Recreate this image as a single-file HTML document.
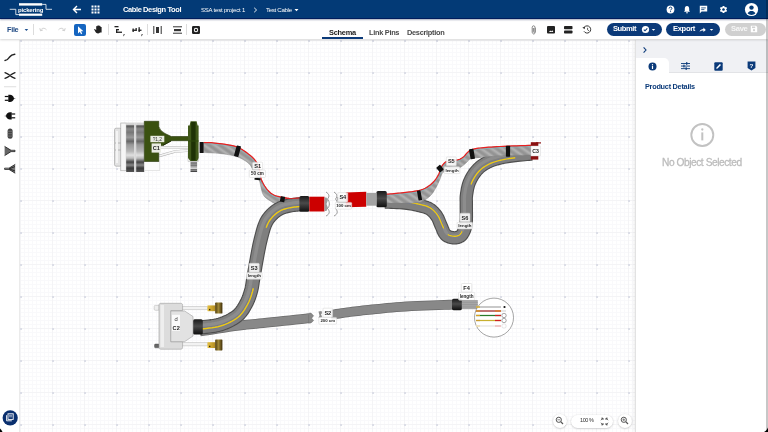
<!DOCTYPE html>
<html><head><meta charset="utf-8">
<style>
*{margin:0;padding:0;box-sizing:border-box}
html,body{width:768px;height:432px;overflow:hidden;background:#fff;font-family:"Liberation Sans",sans-serif}
.a{position:absolute}
#hdr{left:0;top:0;width:768px;height:19px;background:#033a76;border-bottom:1px solid #001c5c;z-index:3;box-shadow:0 1px 1.5px rgba(0,20,70,.35)}
#tb{left:0;top:19px;width:768px;height:20px;background:#fff;z-index:2;box-shadow:0 1px 2px rgba(0,0,0,.16)}
#ls{left:0;top:40px;width:20px;height:392px;background:#fff;border-right:1px solid #ebebeb;z-index:1}
#cv{left:20px;top:40px;width:616px;height:392px;background-color:#fff;
background-image:
 radial-gradient(circle at 1px 1px,#dcdee7 0.8px,transparent 1.6px),
 linear-gradient(#f4f4f6 1px,transparent 1px),
 linear-gradient(90deg,#f4f4f6 1px,transparent 1px),
 linear-gradient(#f9f9fb 1px,transparent 1px),
 linear-gradient(90deg,#f9f9fb 1px,transparent 1px);
background-size:32px 32px,32px 32px,32px 32px,4px 4px,4px 4px;
background-position:0 0,0 0,0 0,0 0,0 0}
#rp{left:635px;top:40px;width:133px;height:392px;background:#fff;border-left:1px solid #e2e2e2;z-index:1;box-shadow:-1px 0 3px rgba(0,0,0,.08)}
.t{white-space:nowrap;line-height:1}
svg,.t{will-change:transform}
</style></head><body>
<div id="cv" class="a"></div>
<svg class="a" style="left:0;top:0" width="768" height="432" viewBox="0 0 768 432">
<defs><linearGradient id="cylg" x1="0" y1="0" x2="0" y2="1"><stop offset="0" stop-color="#1a1a1a"/><stop offset="0.45" stop-color="#4a4a4a"/><stop offset="1" stop-color="#0e0e0e"/></linearGradient><linearGradient id="cyl1" x1="0" y1="0" x2="0" y2="1"><stop offset="0" stop-color="#d8d8d8"/><stop offset="0.04" stop-color="#cfcfcf"/><stop offset="0.07" stop-color="#555"/><stop offset="0.13" stop-color="#8a8a8a"/><stop offset="0.2" stop-color="#777"/><stop offset="0.3" stop-color="#9a9a9a"/><stop offset="0.38" stop-color="#666"/><stop offset="0.45" stop-color="#999"/><stop offset="0.58" stop-color="#b5b5b5"/><stop offset="0.66" stop-color="#e0e0e0"/><stop offset="0.72" stop-color="#bbb"/><stop offset="0.8" stop-color="#444"/><stop offset="0.86" stop-color="#888"/><stop offset="0.92" stop-color="#3a3a3a"/><stop offset="1" stop-color="#555"/></linearGradient><pattern id="rstripe" width="6" height="6" patternUnits="userSpaceOnUse" patternTransform="rotate(-55)"><rect x="0" y="0" width="2.4" height="6" fill="#848484" fill-opacity="0.45"/><rect x="3.4" y="0" width="1.6" height="6" fill="#c4c4c4" fill-opacity="0.5"/></pattern><linearGradient id="brass" x1="0" y1="0" x2="1" y2="0"><stop offset="0" stop-color="#e6c040"/><stop offset="1" stop-color="#b08a20"/></linearGradient><linearGradient id="brass2" x1="0" y1="0" x2="1" y2="0"><stop offset="0" stop-color="#4e3c0c"/><stop offset="0.45" stop-color="#a08838"/><stop offset="1" stop-color="#3e2e08"/></linearGradient></defs>
<path d="M200.00 331.50 L203.08 331.02 L207.27 330.37 L212.25 329.59 L217.75 328.73 L223.47 327.85 L229.11 327.00 L234.38 326.23 L239.00 325.60 L242.93 325.10 L246.45 324.70 L249.69 324.36 L252.81 324.06 L255.96 323.77 L259.27 323.47 L262.91 323.12 L267.00 322.70 L271.87 322.18 L277.50 321.58 L283.57 320.93 L289.75 320.27 L295.71 319.63 L301.12 319.05 L305.66 318.56 L309.00 318.20" stroke="#6a6a6a" stroke-width="9.8" fill="none"/>
<path d="M200.00 331.50 L203.08 331.02 L207.27 330.37 L212.25 329.59 L217.75 328.73 L223.47 327.85 L229.11 327.00 L234.38 326.23 L239.00 325.60 L242.93 325.10 L246.45 324.70 L249.69 324.36 L252.81 324.06 L255.96 323.77 L259.27 323.47 L262.91 323.12 L267.00 322.70 L271.87 322.18 L277.50 321.58 L283.57 320.93 L289.75 320.27 L295.71 319.63 L301.12 319.05 L305.66 318.56 L309.00 318.20" stroke="#888888" stroke-width="8.3" fill="none"/>
<path d="M331.00 314.80 L332.45 314.58 L334.34 314.29 L336.60 313.94 L339.12 313.56 L341.82 313.15 L344.59 312.74 L347.35 312.35 L350.00 312.00 L352.52 311.68 L355.01 311.37 L357.50 311.06 L360.06 310.76 L362.74 310.46 L365.59 310.15 L368.66 309.83 L372.00 309.50 L375.59 309.14 L379.35 308.76 L383.30 308.36 L387.44 307.96 L391.77 307.57 L396.30 307.18 L401.05 306.83 L406.00 306.50 L411.57 306.20 L417.94 305.90 L424.74 305.62 L431.62 305.36 L438.25 305.12 L444.25 304.92 L449.29 304.74 L453.00 304.60" stroke="#6a6a6a" stroke-width="9.8" fill="none"/>
<path d="M331.00 314.80 L332.45 314.58 L334.34 314.29 L336.60 313.94 L339.12 313.56 L341.82 313.15 L344.59 312.74 L347.35 312.35 L350.00 312.00 L352.52 311.68 L355.01 311.37 L357.50 311.06 L360.06 310.76 L362.74 310.46 L365.59 310.15 L368.66 309.83 L372.00 309.50 L375.59 309.14 L379.35 308.76 L383.30 308.36 L387.44 307.96 L391.77 307.57 L396.30 307.18 L401.05 306.83 L406.00 306.50 L411.57 306.20 L417.94 305.90 L424.74 305.62 L431.62 305.36 L438.25 305.12 L444.25 304.92 L449.29 304.74 L453.00 304.60" stroke="#888888" stroke-width="8.3" fill="none"/>
<path d="M203.60 142.50 L204.41 142.53 L205.42 142.54 L206.62 142.55 L207.99 142.58 L209.52 142.64 L211.21 142.73 L213.04 142.88 L215.00 143.10 L217.21 143.36 L219.74 143.65 L222.48 143.97 L225.34 144.34 L228.22 144.78 L231.02 145.29 L233.64 145.89 L236.00 146.60 L238.13 147.45 L240.16 148.43 L242.07 149.53 L243.88 150.69 L245.57 151.88 L247.16 153.07 L248.63 154.22 L250.00 155.30 L251.24 156.30 L252.34 157.26 L253.31 158.20 L254.19 159.13 L254.98 160.06 L255.70 161.01 L256.36 161.98 L257.00 163.00 L257.58 164.07 L258.07 165.18 L258.48 166.32 L258.84 167.48 L259.16 168.64 L259.45 169.79 L259.72 170.91 L260.00 172.00 L260.23 173.04 L260.39 174.04 L260.50 175.02 L260.59 175.98 L260.71 176.95 L260.88 177.93 L261.13 178.94 L261.50 180.00 L261.99 181.13 L262.57 182.32 L263.23 183.56 L263.94 184.81 L264.69 186.03 L265.46 187.21 L266.24 188.31 L267.00 189.30 L267.76 190.19 L268.53 191.02 L269.32 191.78 L270.12 192.49 L270.95 193.14 L271.78 193.74 L272.63 194.29 L273.50 194.80 L274.38 195.25 L275.26 195.62 L276.16 195.94 L277.08 196.21 L278.02 196.44 L278.98 196.66 L279.97 196.88 L281.00 197.10 L282.06 197.33 L283.17 197.56 L284.30 197.77 L285.46 197.97 L286.63 198.15 L287.82 198.30 L289.01 198.42 L290.20 198.50 L291.46 198.53 L292.84 198.50 L294.26 198.43 L295.67 198.34 L297.02 198.23 L298.22 198.13 L299.24 198.05 L300.00 198.00 L300.00 208.00 L299.23 208.01 L298.20 208.05 L296.98 208.09 L295.62 208.12 L294.19 208.15 L292.73 208.14 L291.32 208.10 L290.00 208.00 L288.74 207.86 L287.46 207.69 L286.18 207.49 L284.89 207.26 L283.63 207.00 L282.38 206.70 L281.17 206.37 L280.00 206.00 L278.88 205.60 L277.81 205.17 L276.77 204.71 L275.75 204.21 L274.75 203.68 L273.74 203.10 L272.73 202.47 L271.70 201.80 L270.63 201.11 L269.51 200.43 L268.37 199.72 L267.24 198.96 L266.14 198.12 L265.10 197.16 L264.14 196.07 L263.30 194.80 L262.58 193.25 L261.97 191.40 L261.45 189.35 L260.99 187.21 L260.56 185.10 L260.13 183.12 L259.69 181.39 L259.20 180.00 L258.67 179.01 L258.13 178.33 L257.58 177.88 L257.03 177.58 L256.49 177.32 L255.97 177.03 L255.47 176.62 L255.00 176.00 L254.58 175.18 L254.21 174.23 L253.88 173.21 L253.55 172.12 L253.22 171.03 L252.86 169.95 L252.46 168.93 L252.00 168.00 L251.51 167.15 L251.03 166.35 L250.54 165.59 L250.00 164.85 L249.40 164.13 L248.72 163.42 L247.93 162.72 L247.00 162.00 L245.95 161.26 L244.79 160.51 L243.53 159.75 L242.19 159.01 L240.75 158.28 L239.24 157.60 L237.66 156.97 L236.00 156.40 L234.24 155.90 L232.36 155.44 L230.38 155.03 L228.34 154.66 L226.25 154.33 L224.15 154.03 L222.05 153.75 L220.00 153.50 L217.86 153.28 L215.54 153.09 L213.16 152.94 L210.80 152.82 L208.57 152.72 L206.56 152.64 L204.87 152.56 L203.60 152.50Z" fill="#a2a2a2" stroke="#808080" stroke-width="0.5"/>
<path d="M203.60 142.50 L204.41 142.53 L205.42 142.54 L206.62 142.55 L207.99 142.58 L209.52 142.64 L211.21 142.73 L213.04 142.88 L215.00 143.10 L217.21 143.36 L219.74 143.65 L222.48 143.97 L225.34 144.34 L228.22 144.78 L231.02 145.29 L233.64 145.89 L236.00 146.60 L238.13 147.45 L240.16 148.43 L242.07 149.53 L243.88 150.69 L245.57 151.88 L247.16 153.07 L248.63 154.22 L250.00 155.30 L251.24 156.30 L252.34 157.26 L253.31 158.20 L254.19 159.13 L254.98 160.06 L255.70 161.01 L256.36 161.98 L257.00 163.00 L257.58 164.07 L258.07 165.18 L258.48 166.32 L258.84 167.48 L259.16 168.64 L259.45 169.79 L259.72 170.91 L260.00 172.00 L260.23 173.04 L260.39 174.04 L260.50 175.02 L260.59 175.98 L260.71 176.95 L260.88 177.93 L261.13 178.94 L261.50 180.00 L261.99 181.13 L262.57 182.32 L263.23 183.56 L263.94 184.81 L264.69 186.03 L265.46 187.21 L266.24 188.31 L267.00 189.30 L267.76 190.19 L268.53 191.02 L269.32 191.78 L270.12 192.49 L270.95 193.14 L271.78 193.74 L272.63 194.29 L273.50 194.80 L274.38 195.25 L275.26 195.62 L276.16 195.94 L277.08 196.21 L278.02 196.44 L278.98 196.66 L279.97 196.88 L281.00 197.10 L282.06 197.33 L283.17 197.56 L284.30 197.77 L285.46 197.97 L286.63 198.15 L287.82 198.30 L289.01 198.42 L290.20 198.50 L291.46 198.53 L292.84 198.50 L294.26 198.43 L295.67 198.34 L297.02 198.23 L298.22 198.13 L299.24 198.05 L300.00 198.00 L300.00 208.00 L299.23 208.01 L298.20 208.05 L296.98 208.09 L295.62 208.12 L294.19 208.15 L292.73 208.14 L291.32 208.10 L290.00 208.00 L288.74 207.86 L287.46 207.69 L286.18 207.49 L284.89 207.26 L283.63 207.00 L282.38 206.70 L281.17 206.37 L280.00 206.00 L278.88 205.60 L277.81 205.17 L276.77 204.71 L275.75 204.21 L274.75 203.68 L273.74 203.10 L272.73 202.47 L271.70 201.80 L270.63 201.11 L269.51 200.43 L268.37 199.72 L267.24 198.96 L266.14 198.12 L265.10 197.16 L264.14 196.07 L263.30 194.80 L262.58 193.25 L261.97 191.40 L261.45 189.35 L260.99 187.21 L260.56 185.10 L260.13 183.12 L259.69 181.39 L259.20 180.00 L258.67 179.01 L258.13 178.33 L257.58 177.88 L257.03 177.58 L256.49 177.32 L255.97 177.03 L255.47 176.62 L255.00 176.00 L254.58 175.18 L254.21 174.23 L253.88 173.21 L253.55 172.12 L253.22 171.03 L252.86 169.95 L252.46 168.93 L252.00 168.00 L251.51 167.15 L251.03 166.35 L250.54 165.59 L250.00 164.85 L249.40 164.13 L248.72 163.42 L247.93 162.72 L247.00 162.00 L245.95 161.26 L244.79 160.51 L243.53 159.75 L242.19 159.01 L240.75 158.28 L239.24 157.60 L237.66 156.97 L236.00 156.40 L234.24 155.90 L232.36 155.44 L230.38 155.03 L228.34 154.66 L226.25 154.33 L224.15 154.03 L222.05 153.75 L220.00 153.50 L217.86 153.28 L215.54 153.09 L213.16 152.94 L210.80 152.82 L208.57 152.72 L206.56 152.64 L204.87 152.56 L203.60 152.50Z" fill="url(#rstripe)"/>
<path d="M203.56 143.60 L204.39 143.63 L205.41 143.64 L206.60 143.65 L207.96 143.68 L209.47 143.74 L211.13 143.83 L212.93 143.98 L214.87 144.19 L217.09 144.46 L219.61 144.74 L222.34 145.06 L225.18 145.43 L228.03 145.86 L230.80 146.37 L233.36 146.96 L235.64 147.64 L237.69 148.45 L239.64 149.41 L241.50 150.47 L243.26 151.60 L244.92 152.77 L246.49 153.95 L247.95 155.09 L249.31 156.16 L250.53 157.14 L251.59 158.08 L252.53 158.98 L253.37 159.86 L254.12 160.75 L254.80 161.65 L255.44 162.58 L256.05 163.55 L256.59 164.55 L257.05 165.59 L257.44 166.68 L257.79 167.79 L258.10 168.92 L258.38 170.05 L258.66 171.18 L258.93 172.26 L259.15 173.24 L259.30 174.19 L259.40 175.13 L259.50 176.10 L259.62 177.11 L259.80 178.16 L260.08 179.26 L260.48 180.40 L260.99 181.59 L261.59 182.82 L262.26 184.09 L262.99 185.37 L263.76 186.62 L264.55 187.83 L265.35 188.96 L266.14 189.99 L266.94 190.92 L267.75 191.79 L268.57 192.59 L269.42 193.33 L270.28 194.02 L271.16 194.65 L272.06 195.23 L272.97 195.76 L273.91 196.24 L274.87 196.65 L275.83 196.98 L276.79 197.27 L277.76 197.51 L278.74 197.74 L279.74 197.95 L280.77 198.17 L281.84 198.41 L282.95 198.64 L284.10 198.86 L285.28 199.06 L286.48 199.24 L287.69 199.40 L288.92 199.52 L290.15 199.60 L291.46 199.62 L292.87 199.60 L294.32 199.53 L295.75 199.43 L297.10 199.33 L298.32 199.23 L299.32 199.15 L300.07 199.10" stroke="#80b8c2" stroke-width="0.8" fill="none"/>
<path d="M203.60 142.50 L204.41 142.53 L205.42 142.54 L206.62 142.55 L207.99 142.58 L209.52 142.64 L211.21 142.73 L213.04 142.88 L215.00 143.10 L217.21 143.36 L219.74 143.65 L222.48 143.97 L225.34 144.34 L228.22 144.78 L231.02 145.29 L233.64 145.89 L236.00 146.60 L238.13 147.45 L240.16 148.43 L242.07 149.53 L243.88 150.69 L245.57 151.88 L247.16 153.07 L248.63 154.22 L250.00 155.30 L251.24 156.30 L252.34 157.26 L253.31 158.20 L254.19 159.13 L254.98 160.06 L255.70 161.01 L256.36 161.98 L257.00 163.00 L257.58 164.07 L258.07 165.18 L258.48 166.32 L258.84 167.48 L259.16 168.64 L259.45 169.79 L259.72 170.91 L260.00 172.00 L260.23 173.04 L260.39 174.04 L260.50 175.02 L260.59 175.98 L260.71 176.95 L260.88 177.93 L261.13 178.94 L261.50 180.00 L261.99 181.13 L262.57 182.32 L263.23 183.56 L263.94 184.81 L264.69 186.03 L265.46 187.21 L266.24 188.31 L267.00 189.30 L267.76 190.19 L268.53 191.02 L269.32 191.78 L270.12 192.49 L270.95 193.14 L271.78 193.74 L272.63 194.29 L273.50 194.80 L274.38 195.25 L275.26 195.62 L276.16 195.94 L277.08 196.21 L278.02 196.44 L278.98 196.66 L279.97 196.88 L281.00 197.10 L282.06 197.33 L283.17 197.56 L284.30 197.77 L285.46 197.97 L286.63 198.15 L287.82 198.30 L289.01 198.42 L290.20 198.50 L291.46 198.53 L292.84 198.50 L294.26 198.43 L295.67 198.34 L297.02 198.23 L298.22 198.13 L299.24 198.05 L300.00 198.00" stroke="#e82020" stroke-width="1.25" fill="none"/>
<path d="M200.00 327.50 L201.56 327.31 L203.66 327.09 L206.17 326.84 L208.94 326.53 L211.84 326.16 L214.74 325.71 L217.51 325.16 L220.00 324.50 L222.32 323.72 L224.65 322.84 L226.95 321.87 L229.19 320.81 L231.34 319.69 L233.38 318.50 L235.28 317.27 L237.00 316.00 L238.54 314.67 L239.91 313.27 L241.14 311.80 L242.25 310.28 L243.27 308.73 L244.22 307.15 L245.12 305.57 L246.00 304.00 L246.83 302.42 L247.59 300.81 L248.29 299.18 L248.92 297.53 L249.50 295.88 L250.03 294.24 L250.53 292.61 L251.00 291.00 L251.41 289.43 L251.76 287.91 L252.04 286.41 L252.29 284.91 L252.53 283.39 L252.76 281.82 L253.01 280.20 L253.30 278.50 L253.62 276.71 L253.94 274.85 L254.27 272.93 L254.61 270.97 L254.95 268.98 L255.29 266.98 L255.65 264.98 L256.00 263.00 L256.36 260.99 L256.74 258.93 L257.12 256.84 L257.50 254.75 L257.88 252.69 L258.26 250.70 L258.64 248.79 L259.00 247.00 L259.35 245.33 L259.69 243.76 L260.03 242.27 L260.36 240.84 L260.69 239.47 L261.02 238.13 L261.36 236.81 L261.70 235.50 L262.04 234.20 L262.38 232.93 L262.71 231.68 L263.05 230.47 L263.39 229.29 L263.75 228.15 L264.12 227.05 L264.50 226.00 L264.89 225.00 L265.27 224.06 L265.65 223.17 L266.05 222.31 L266.47 221.48 L266.93 220.66 L267.44 219.83 L268.00 219.00 L268.62 218.15 L269.30 217.29 L270.02 216.44 L270.78 215.59 L271.57 214.77 L272.37 213.97 L273.19 213.21 L274.00 212.50 L274.81 211.83 L275.63 211.19 L276.46 210.58 L277.31 210.00 L278.18 209.45 L279.09 208.94 L280.02 208.45 L281.00 208.00 L282.02 207.58 L283.09 207.20 L284.18 206.86 L285.31 206.54 L286.46 206.25 L287.63 205.99 L288.81 205.74 L290.00 205.50 L291.27 205.28 L292.66 205.08 L294.12 204.90 L295.56 204.74 L296.94 204.60 L298.18 204.49 L299.22 204.38 L300.00 204.30" stroke="#4e4e4e" stroke-width="14.2" fill="none" stroke-linejoin="round"/>
<path d="M200.00 327.50 L201.56 327.31 L203.66 327.09 L206.17 326.84 L208.94 326.53 L211.84 326.16 L214.74 325.71 L217.51 325.16 L220.00 324.50 L222.32 323.72 L224.65 322.84 L226.95 321.87 L229.19 320.81 L231.34 319.69 L233.38 318.50 L235.28 317.27 L237.00 316.00 L238.54 314.67 L239.91 313.27 L241.14 311.80 L242.25 310.28 L243.27 308.73 L244.22 307.15 L245.12 305.57 L246.00 304.00 L246.83 302.42 L247.59 300.81 L248.29 299.18 L248.92 297.53 L249.50 295.88 L250.03 294.24 L250.53 292.61 L251.00 291.00 L251.41 289.43 L251.76 287.91 L252.04 286.41 L252.29 284.91 L252.53 283.39 L252.76 281.82 L253.01 280.20 L253.30 278.50 L253.62 276.71 L253.94 274.85 L254.27 272.93 L254.61 270.97 L254.95 268.98 L255.29 266.98 L255.65 264.98 L256.00 263.00 L256.36 260.99 L256.74 258.93 L257.12 256.84 L257.50 254.75 L257.88 252.69 L258.26 250.70 L258.64 248.79 L259.00 247.00 L259.35 245.33 L259.69 243.76 L260.03 242.27 L260.36 240.84 L260.69 239.47 L261.02 238.13 L261.36 236.81 L261.70 235.50 L262.04 234.20 L262.38 232.93 L262.71 231.68 L263.05 230.47 L263.39 229.29 L263.75 228.15 L264.12 227.05 L264.50 226.00 L264.89 225.00 L265.27 224.06 L265.65 223.17 L266.05 222.31 L266.47 221.48 L266.93 220.66 L267.44 219.83 L268.00 219.00 L268.62 218.15 L269.30 217.29 L270.02 216.44 L270.78 215.59 L271.57 214.77 L272.37 213.97 L273.19 213.21 L274.00 212.50 L274.81 211.83 L275.63 211.19 L276.46 210.58 L277.31 210.00 L278.18 209.45 L279.09 208.94 L280.02 208.45 L281.00 208.00 L282.02 207.58 L283.09 207.20 L284.18 206.86 L285.31 206.54 L286.46 206.25 L287.63 205.99 L288.81 205.74 L290.00 205.50 L291.27 205.28 L292.66 205.08 L294.12 204.90 L295.56 204.74 L296.94 204.60 L298.18 204.49 L299.22 204.38 L300.00 204.30" stroke="#7f7f7f" stroke-width="12.0" fill="none" stroke-linejoin="round"/>
<path d="M199.76 325.53 L201.34 325.33 L203.46 325.11 L205.96 324.86 L208.70 324.56 L211.56 324.19 L214.40 323.75 L217.06 323.22 L219.43 322.59 L221.66 321.85 L223.91 321.00 L226.13 320.05 L228.30 319.03 L230.38 317.94 L232.34 316.81 L234.15 315.63 L235.76 314.44 L237.17 313.23 L238.43 311.94 L239.57 310.57 L240.62 309.15 L241.59 307.67 L242.50 306.15 L243.39 304.59 L244.25 303.05 L245.06 301.53 L245.78 300.00 L246.44 298.43 L247.05 296.84 L247.62 295.24 L248.14 293.64 L248.63 292.04 L249.08 290.47 L249.48 288.96 L249.81 287.51 L250.09 286.06 L250.33 284.59 L250.56 283.09 L250.79 281.52 L251.05 279.88 L251.34 278.16 L251.66 276.37 L251.98 274.51 L252.31 272.59 L252.65 270.63 L252.99 268.64 L253.34 266.64 L253.69 264.64 L254.04 262.65 L254.41 260.64 L254.78 258.57 L255.16 256.48 L255.55 254.39 L255.93 252.32 L256.31 250.32 L256.69 248.40 L257.05 246.60 L257.41 244.92 L257.75 243.33 L258.09 241.83 L258.43 240.39 L258.76 239.00 L259.10 237.65 L259.43 236.32 L259.78 235.00 L260.12 233.69 L260.46 232.41 L260.79 231.16 L261.14 229.92 L261.49 228.72 L261.86 227.54 L262.24 226.40 L262.64 225.30 L263.04 224.27 L263.43 223.30 L263.84 222.36 L264.26 221.44 L264.72 220.54 L265.22 219.65 L265.77 218.76 L266.37 217.86 L267.04 216.94 L267.76 216.03 L268.52 215.13 L269.32 214.24 L270.15 213.38 L270.99 212.54 L271.85 211.74 L272.71 210.99 L273.57 210.28 L274.43 209.60 L275.32 208.95 L276.22 208.34 L277.16 207.75 L278.14 207.19 L279.15 206.67 L280.21 206.18 L281.31 205.73 L282.45 205.32 L283.62 204.95 L284.80 204.62 L286.00 204.32 L287.20 204.05 L288.41 203.79 L289.64 203.55 L290.96 203.32 L292.40 203.11 L293.89 202.93 L295.35 202.77 L296.74 202.63 L297.99 202.51 L299.02 202.41 L299.79 202.32" stroke="#8d8d8d" stroke-width="3.4" fill="none" stroke-linejoin="round"/>
<path d="M200.20 329.09 L201.74 328.90 L203.83 328.68 L206.34 328.43 L209.13 328.12 L212.07 327.74 L215.02 327.28 L217.86 326.72 L220.46 326.03 L222.86 325.23 L225.24 324.33 L227.60 323.33 L229.90 322.25 L232.12 321.09 L234.22 319.86 L236.19 318.58 L238.00 317.25 L239.63 315.84 L241.09 314.34 L242.40 312.79 L243.56 311.19 L244.62 309.58 L245.60 307.96 L246.51 306.36 L247.41 304.76 L248.27 303.13 L249.05 301.46 L249.77 299.78 L250.42 298.08 L251.01 296.40 L251.56 294.72 L252.06 293.07 L252.54 291.43 L252.97 289.81 L253.32 288.26" stroke="#6f7796" stroke-width="2.8" fill="none"/>
<path d="M200.20 329.09 L201.74 328.90 L203.83 328.68 L206.34 328.43 L209.13 328.12 L212.07 327.74 L215.02 327.28 L217.86 326.72 L220.46 326.03 L222.86 325.23 L225.24 324.33 L227.60 323.33 L229.90 322.25 L232.12 321.09 L234.22 319.86 L236.19 318.58 L238.00 317.25 L239.63 315.84 L241.09 314.34 L242.40 312.79 L243.56 311.19 L244.62 309.58 L245.60 307.96 L246.51 306.36 L247.41 304.76 L248.27 303.13 L249.05 301.46 L249.77 299.78 L250.42 298.08 L251.01 296.40 L251.56 294.72 L252.06 293.07 L252.54 291.43 L252.97 289.81 L253.32 288.26" stroke="#ecc814" stroke-width="1.5" fill="none"/>
<path d="M266.18 227.81 L266.56 226.77 L266.93 225.81 L267.30 224.91 L267.66 224.07 L268.03 223.27 L268.42 222.51 L268.83 221.77 L269.29 221.03 L269.80 220.27 L270.37 219.48 L271.00 218.69 L271.68 217.88 L272.40 217.09 L273.14 216.31 L273.90 215.56 L274.66 214.85 L275.43 214.18 L276.19 213.54 L276.96 212.94 L277.73 212.37 L278.52 211.84 L279.32 211.34 L280.14 210.87 L280.99 210.43 L281.88 210.02 L282.81 209.64 L283.78 209.29 L284.81 208.97 L285.88 208.67 L286.98 208.39 L288.11 208.14 L289.26 207.89 L290.40 207.66 L291.61 207.45 L292.95 207.26 L294.37 207.09 L295.79 206.93 L297.15 206.79 L298.39 206.67 L299.44 206.57 L300.24 206.49" stroke="#6f7796" stroke-width="2.8" fill="none"/>
<path d="M266.18 227.81 L266.56 226.77 L266.93 225.81 L267.30 224.91 L267.66 224.07 L268.03 223.27 L268.42 222.51 L268.83 221.77 L269.29 221.03 L269.80 220.27 L270.37 219.48 L271.00 218.69 L271.68 217.88 L272.40 217.09 L273.14 216.31 L273.90 215.56 L274.66 214.85 L275.43 214.18 L276.19 213.54 L276.96 212.94 L277.73 212.37 L278.52 211.84 L279.32 211.34 L280.14 210.87 L280.99 210.43 L281.88 210.02 L282.81 209.64 L283.78 209.29 L284.81 208.97 L285.88 208.67 L286.98 208.39 L288.11 208.14 L289.26 207.89 L290.40 207.66 L291.61 207.45 L292.95 207.26 L294.37 207.09 L295.79 206.93 L297.15 206.79 L298.39 206.67 L299.44 206.57 L300.24 206.49" stroke="#ecc814" stroke-width="1.5" fill="none"/>
<path d="M281.00 197.10 L281.71 197.22 L282.64 197.40 L283.75 197.61 L284.99 197.83 L286.30 198.05 L287.64 198.25 L288.96 198.41 L290.20 198.50 L291.46 198.53 L292.84 198.50 L294.26 198.43 L295.67 198.34 L297.02 198.23 L298.22 198.13 L299.24 198.05 L300.00 198.00" stroke="#e32222" stroke-width="1" fill="none"/>
<path d="M385.00 202.00 L386.58 202.06 L388.71 202.14 L391.25 202.22 L394.06 202.33 L396.99 202.45 L399.88 202.60 L402.60 202.78 L405.00 203.00 L407.15 203.26 L409.23 203.56 L411.23 203.90 L413.15 204.26 L414.99 204.64 L416.75 205.03 L418.42 205.42 L420.00 205.80 L421.48 206.15 L422.84 206.48 L424.11 206.80 L425.30 207.14 L426.43 207.50 L427.51 207.92 L428.56 208.42 L429.60 209.00 L430.62 209.68 L431.59 210.42 L432.53 211.24 L433.43 212.11 L434.28 213.02 L435.09 213.99 L435.87 214.98 L436.60 216.00 L437.28 217.07 L437.89 218.22 L438.46 219.42 L438.99 220.66 L439.49 221.90 L439.99 223.14 L440.49 224.34 L441.00 225.50 L441.51 226.65 L441.99 227.82 L442.46 228.99 L442.93 230.14 L443.40 231.24 L443.90 232.26 L444.43 233.19 L445.00 234.00 L445.62 234.68 L446.26 235.26 L446.93 235.75 L447.63 236.17 L448.35 236.52 L449.09 236.81 L449.84 237.07 L450.60 237.30 L451.40 237.50 L452.24 237.65 L453.10 237.76 L453.98 237.83 L454.86 237.83 L455.71 237.78 L456.53 237.67 L457.30 237.50 L458.02 237.28 L458.72 237.04 L459.40 236.74 L460.04 236.39 L460.67 235.95 L461.27 235.42 L461.85 234.77 L462.40 234.00 L462.94 233.12 L463.48 232.17 L464.00 231.12 L464.50 229.97 L464.96 228.69 L465.37 227.29 L465.72 225.73 L466.00 224.00 L466.20 221.99 L466.31 219.67 L466.36 217.14 L466.36 214.50 L466.34 211.86 L466.31 209.33 L466.29 207.01 L466.30 205.00 L466.31 203.34 L466.29 201.94 L466.26 200.72 L466.23 199.62 L466.22 198.57 L466.26 197.50 L466.34 196.33 L466.50 195.00 L466.71 193.51 L466.95 191.94 L467.22 190.30 L467.54 188.62 L467.92 186.93 L468.37 185.25 L468.89 183.60 L469.50 182.00 L470.21 180.42 L471.00 178.82 L471.87 177.23 L472.81 175.66 L473.81 174.13 L474.84 172.66 L475.91 171.28 L477.00 170.00 L478.11 168.83 L479.25 167.74 L480.44 166.73 L481.66 165.78 L482.92 164.90 L484.23 164.06 L485.59 163.26 L487.00 162.50 L488.47 161.78 L489.99 161.12 L491.57 160.50 L493.19 159.94 L494.85 159.41 L496.54 158.91 L498.26 158.45 L500.00 158.00 L501.77 157.58 L503.56 157.21 L505.39 156.87 L507.25 156.56 L509.14 156.28 L511.06 156.01 L513.02 155.75 L515.00 155.50 L517.15 155.25 L519.51 155.02 L521.98 154.80 L524.44 154.59 L526.78 154.41 L528.90 154.25 L530.67 154.11 L532.00 154.00" stroke="#4e4e4e" stroke-width="13.4" fill="none" stroke-linejoin="round"/>
<path d="M385.00 202.00 L386.58 202.06 L388.71 202.14 L391.25 202.22 L394.06 202.33 L396.99 202.45 L399.88 202.60 L402.60 202.78 L405.00 203.00 L407.15 203.26 L409.23 203.56 L411.23 203.90 L413.15 204.26 L414.99 204.64 L416.75 205.03 L418.42 205.42 L420.00 205.80 L421.48 206.15 L422.84 206.48 L424.11 206.80 L425.30 207.14 L426.43 207.50 L427.51 207.92 L428.56 208.42 L429.60 209.00 L430.62 209.68 L431.59 210.42 L432.53 211.24 L433.43 212.11 L434.28 213.02 L435.09 213.99 L435.87 214.98 L436.60 216.00 L437.28 217.07 L437.89 218.22 L438.46 219.42 L438.99 220.66 L439.49 221.90 L439.99 223.14 L440.49 224.34 L441.00 225.50 L441.51 226.65 L441.99 227.82 L442.46 228.99 L442.93 230.14 L443.40 231.24 L443.90 232.26 L444.43 233.19 L445.00 234.00 L445.62 234.68 L446.26 235.26 L446.93 235.75 L447.63 236.17 L448.35 236.52 L449.09 236.81 L449.84 237.07 L450.60 237.30 L451.40 237.50 L452.24 237.65 L453.10 237.76 L453.98 237.83 L454.86 237.83 L455.71 237.78 L456.53 237.67 L457.30 237.50 L458.02 237.28 L458.72 237.04 L459.40 236.74 L460.04 236.39 L460.67 235.95 L461.27 235.42 L461.85 234.77 L462.40 234.00 L462.94 233.12 L463.48 232.17 L464.00 231.12 L464.50 229.97 L464.96 228.69 L465.37 227.29 L465.72 225.73 L466.00 224.00 L466.20 221.99 L466.31 219.67 L466.36 217.14 L466.36 214.50 L466.34 211.86 L466.31 209.33 L466.29 207.01 L466.30 205.00 L466.31 203.34 L466.29 201.94 L466.26 200.72 L466.23 199.62 L466.22 198.57 L466.26 197.50 L466.34 196.33 L466.50 195.00 L466.71 193.51 L466.95 191.94 L467.22 190.30 L467.54 188.62 L467.92 186.93 L468.37 185.25 L468.89 183.60 L469.50 182.00 L470.21 180.42 L471.00 178.82 L471.87 177.23 L472.81 175.66 L473.81 174.13 L474.84 172.66 L475.91 171.28 L477.00 170.00 L478.11 168.83 L479.25 167.74 L480.44 166.73 L481.66 165.78 L482.92 164.90 L484.23 164.06 L485.59 163.26 L487.00 162.50 L488.47 161.78 L489.99 161.12 L491.57 160.50 L493.19 159.94 L494.85 159.41 L496.54 158.91 L498.26 158.45 L500.00 158.00 L501.77 157.58 L503.56 157.21 L505.39 156.87 L507.25 156.56 L509.14 156.28 L511.06 156.01 L513.02 155.75 L515.00 155.50 L517.15 155.25 L519.51 155.02 L521.98 154.80 L524.44 154.59 L526.78 154.41 L528.90 154.25 L530.67 154.11 L532.00 154.00" stroke="#7f7f7f" stroke-width="11.2" fill="none" stroke-linejoin="round"/>
<path d="M385.08 200.13 L386.65 200.19 L388.77 200.26 L391.32 200.35 L394.14 200.45 L397.08 200.58 L399.99 200.73 L402.75 200.91 L405.20 201.13 L407.40 201.40 L409.52 201.71 L411.56 202.05 L413.51 202.42 L415.38 202.81 L417.16 203.20 L418.85 203.59 L420.44 203.98 L421.91 204.33 L423.29 204.66 L424.59 204.99 L425.84 205.34 L427.06 205.74 L428.25 206.20 L429.42 206.75 L430.58 207.40 L431.71 208.15 L432.78 208.97 L433.80 209.86 L434.77 210.79 L435.68 211.78 L436.55 212.80 L437.37 213.86 L438.16 214.95 L438.90 216.13 L439.57 217.38 L440.17 218.65 L440.72 219.93 L441.23 221.20 L441.73 222.43 L442.21 223.61 L442.71 224.74 L443.23 225.91 L443.73 227.11 L444.20 228.29 L444.66 229.41 L445.11 230.46 L445.56 231.39 L446.01 232.19 L446.47 232.83 L446.94 233.36 L447.45 233.81 L447.97 234.19 L448.52 234.52 L449.11 234.80 L449.74 235.06 L450.41 235.28 L451.10 235.49 L451.79 235.67 L452.52 235.80 L453.28 235.90 L454.05 235.95 L454.81 235.96 L455.53 235.92 L456.20 235.83 L456.83 235.68 L457.44 235.50 L458.04 235.29 L458.57 235.06 L459.05 234.80 L459.50 234.48 L459.94 234.09 L460.38 233.60 L460.84 232.96 L461.33 232.17 L461.83 231.29 L462.30 230.33 L462.75 229.28 L463.17 228.12 L463.55 226.82 L463.88 225.37 L464.14 223.76 L464.32 221.86 L464.43 219.61 L464.48 217.12 L464.49 214.51 L464.46 211.88 L464.43 209.35 L464.41 207.01 L464.42 204.99 L464.43 203.35 L464.42 201.97 L464.38 200.77 L464.36 199.66 L464.35 198.55 L464.38 197.40 L464.47 196.15 L464.64 194.76 L464.85 193.24 L465.10 191.64 L465.38 189.97 L465.71 188.24 L466.10 186.49 L466.57 184.73 L467.12 182.98 L467.77 181.28 L468.51 179.62 L469.34 177.96 L470.24 176.30 L471.22 174.66 L472.25 173.07 L473.34 171.55 L474.45 170.10 L475.60 168.75 L476.78 167.50 L478.00 166.35 L479.25 165.27 L480.54 164.27 L481.88 163.34 L483.25 162.46 L484.67 161.63 L486.14 160.83 L487.68 160.08 L489.28 159.38 L490.92 158.74 L492.59 158.16 L494.30 157.61 L496.03 157.11 L497.78 156.63 L499.55 156.18 L501.36 155.75 L503.20 155.37 L505.07 155.02 L506.96 154.71 L508.87 154.42 L510.81 154.15 L512.78 153.89 L514.78 153.64 L516.95 153.39 L519.33 153.15 L521.81 152.93 L524.29 152.72 L526.64 152.54 L528.75 152.38 L530.53 152.24 L531.85 152.13" stroke="#8d8d8d" stroke-width="3.2" fill="none" stroke-linejoin="round"/>
<path d="M405.16 201.71 L407.32 201.97 L409.43 202.28 L411.46 202.62 L413.40 202.99 L415.26 203.37 L417.03 203.76 L418.72 204.15 L420.30 204.54 L421.78 204.89 L423.15 205.22 L424.44 205.55 L425.68 205.89 L426.86 206.28 L428.02 206.73 L429.16 207.26 L430.28 207.89 L431.37 208.62 L432.42 209.42 L433.41 210.28 L434.35 211.20 L435.25 212.16 L436.10 213.17 L436.91 214.20 L437.68 215.27 L438.40 216.42 L439.05 217.64 L439.64 218.89 L440.19 220.15 L440.70 221.41 L441.19 222.65 L441.68 223.83 L442.19 224.97 L442.70 226.13 L443.20 227.33 L443.67 228.51" stroke="#6f7796" stroke-width="2.6" fill="none"/>
<path d="M405.16 201.71 L407.32 201.97 L409.43 202.28 L411.46 202.62 L413.40 202.99 L415.26 203.37 L417.03 203.76 L418.72 204.15 L420.30 204.54 L421.78 204.89 L423.15 205.22 L424.44 205.55 L425.68 205.89 L426.86 206.28 L428.02 206.73 L429.16 207.26 L430.28 207.89 L431.37 208.62 L432.42 209.42 L433.41 210.28 L434.35 211.20 L435.25 212.16 L436.10 213.17 L436.91 214.20 L437.68 215.27 L438.40 216.42 L439.05 217.64 L439.64 218.89 L440.19 220.15 L440.70 221.41 L441.19 222.65 L441.68 223.83 L442.19 224.97 L442.70 226.13 L443.20 227.33 L443.67 228.51" stroke="#ecc814" stroke-width="1.4" fill="none"/>
<path d="M447.75 234.38 L448.39 234.76 L449.00 235.06 L449.64 235.32 L450.32 235.55 L451.02 235.76 L451.73 235.93 L452.48 236.07 L453.26 236.17 L454.04 236.23 L454.82 236.23 L455.56 236.19 L456.25 236.10 L456.90 235.95 L457.53 235.76 L458.14 235.55 L458.69 235.31 L459.20 235.03 L459.67 234.70 L460.14 234.29 L460.59 233.78 L461.07 233.11 L461.57 232.31 L462.09 231.38" stroke="#6f7796" stroke-width="2.6" fill="none"/>
<path d="M447.75 234.38 L448.39 234.76 L449.00 235.06 L449.64 235.32 L450.32 235.55 L451.02 235.76 L451.73 235.93 L452.48 236.07 L453.26 236.17 L454.04 236.23 L454.82 236.23 L455.56 236.19 L456.25 236.10 L456.90 235.95 L457.53 235.76 L458.14 235.55 L458.69 235.31 L459.20 235.03 L459.67 234.70 L460.14 234.29 L460.59 233.78 L461.07 233.11 L461.57 232.31 L462.09 231.38" stroke="#ecc814" stroke-width="1.4" fill="none"/>
<path d="M471.04 184.42 L471.63 182.88 L472.28 181.40 L473.04 179.89 L473.87 178.37 L474.76 176.87 L475.71 175.42 L476.69 174.03 L477.70 172.73 L478.71 171.54 L479.74 170.45 L480.80 169.44 L481.89 168.51 L483.02 167.63 L484.20 166.81 L485.43 166.02 L486.72 165.27 L488.05 164.54 L489.43 163.87 L490.87 163.24 L492.36 162.66 L493.92 162.12 L495.52 161.61 L497.16 161.13 L498.85 160.67 L500.55 160.23 L502.26 159.83 L504.01 159.47 L505.79 159.14 L507.61 158.83 L509.47 158.55 L511.37 158.29 L513.31 158.03 L515.29 157.78" stroke="#6f7796" stroke-width="2.6" fill="none"/>
<path d="M471.04 184.42 L471.63 182.88 L472.28 181.40 L473.04 179.89 L473.87 178.37 L474.76 176.87 L475.71 175.42 L476.69 174.03 L477.70 172.73 L478.71 171.54 L479.74 170.45 L480.80 169.44 L481.89 168.51 L483.02 167.63 L484.20 166.81 L485.43 166.02 L486.72 165.27 L488.05 164.54 L489.43 163.87 L490.87 163.24 L492.36 162.66 L493.92 162.12 L495.52 161.61 L497.16 161.13 L498.85 160.67 L500.55 160.23 L502.26 159.83 L504.01 159.47 L505.79 159.14 L507.61 158.83 L509.47 158.55 L511.37 158.29 L513.31 158.03 L515.29 157.78" stroke="#ecc814" stroke-width="1.4" fill="none"/>
<path d="M386.00 194.30 L387.07 194.20 L388.49 194.08 L390.18 193.93 L392.06 193.76 L394.06 193.58 L396.10 193.39 L398.11 193.20 L400.00 193.00 L401.86 192.81 L403.79 192.61 L405.76 192.41 L407.74 192.21 L409.68 191.98 L411.56 191.75 L413.35 191.49 L415.00 191.20 L416.52 190.91 L417.93 190.61 L419.26 190.31 L420.51 189.99 L421.72 189.63 L422.89 189.22 L424.04 188.75 L425.20 188.20 L426.36 187.57 L427.50 186.87 L428.63 186.10 L429.72 185.29 L430.77 184.44 L431.77 183.56 L432.72 182.68 L433.60 181.80 L434.41 180.90 L435.17 179.97 L435.87 179.01 L436.52 178.03 L437.12 177.05 L437.69 176.08 L438.21 175.12 L438.70 174.20 L439.13 173.29 L439.49 172.36 L439.80 171.45 L440.07 170.54 L440.33 169.67 L440.59 168.83 L440.87 168.03 L441.20 167.30 L441.57 166.62 L441.96 165.98 L442.38 165.37 L442.79 164.81 L443.21 164.29 L443.63 163.82 L444.02 163.39 L444.40 163.00 L444.73 162.68 L445.01 162.42 L445.27 162.21 L445.52 162.04 L445.80 161.90 L446.12 161.77 L446.52 161.64 L447.00 161.50 L447.59 161.35 L448.26 161.21 L449.00 161.09 L449.79 160.97 L450.60 160.85 L451.42 160.74 L452.23 160.62 L453.00 160.50 L453.76 160.39 L454.54 160.29 L455.32 160.20 L456.09 160.11 L456.86 160.00 L457.61 159.87 L458.32 159.71 L459.00 159.50 L459.64 159.25 L460.25 158.98 L460.83 158.67 L461.39 158.34 L461.93 157.99 L462.46 157.61 L462.98 157.22 L463.50 156.80 L464.01 156.34 L464.50 155.84 L464.98 155.30 L465.45 154.75 L465.91 154.20 L466.37 153.66 L466.83 153.16 L467.30 152.70 L467.73 152.29 L468.11 151.91 L468.46 151.55 L468.83 151.22 L469.23 150.90 L469.70 150.59 L470.28 150.29 L471.00 150.00 L471.80 149.71 L472.62 149.44 L473.50 149.18 L474.48 148.93 L475.59 148.68 L476.85 148.45 L478.31 148.22 L480.00 148.00 L481.90 147.79 L483.97 147.58 L486.21 147.39 L488.62 147.20 L491.21 147.02 L493.97 146.84 L496.90 146.67 L500.00 146.50 L503.56 146.33 L507.70 146.15 L512.18 145.98 L516.75 145.81 L521.16 145.65 L525.17 145.51 L528.53 145.39 L531.00 145.30 L531.00 155.00 L528.92 155.04 L526.07 155.08 L522.67 155.13 L518.94 155.19 L515.09 155.25 L511.34 155.33 L507.90 155.41 L505.00 155.50 L502.60 155.60 L500.48 155.70 L498.57 155.82 L496.81 155.94 L495.14 156.07 L493.49 156.20 L491.80 156.35 L490.00 156.50 L488.06 156.67 L486.02 156.85 L483.94 157.05 L481.88 157.25 L479.89 157.45 L478.05 157.65 L476.40 157.83 L475.00 158.00 L473.88 158.14 L473.00 158.24 L472.30 158.32 L471.75 158.41 L471.29 158.50 L470.88 158.62 L470.46 158.78 L470.00 159.00 L469.54 159.28 L469.13 159.60 L468.77 159.96 L468.44 160.34 L468.11 160.75 L467.77 161.17 L467.41 161.59 L467.00 162.00 L466.55 162.42 L466.07 162.86 L465.57 163.32 L465.06 163.78 L464.54 164.24 L464.02 164.68 L463.51 165.11 L463.00 165.50 L462.51 165.87 L462.05 166.22 L461.59 166.55 L461.12 166.88 L460.65 167.18 L460.14 167.47 L459.60 167.74 L459.00 168.00 L458.35 168.24 L457.64 168.46 L456.90 168.66 L456.12 168.84 L455.34 169.02 L454.55 169.18 L453.76 169.34 L453.00 169.50 L452.24 169.64 L451.46 169.75 L450.68 169.85 L449.91 169.94 L449.14 170.04 L448.39 170.16 L447.68 170.31 L447.00 170.50 L446.35 170.72 L445.72 170.94 L445.11 171.17 L444.53 171.44 L443.98 171.74 L443.45 172.09 L442.96 172.51 L442.50 173.00 L442.10 173.57 L441.77 174.20 L441.48 174.88 L441.22 175.62 L440.96 176.41 L440.68 177.24 L440.37 178.11 L440.00 179.00 L439.59 179.94 L439.15 180.95 L438.70 182.00 L438.22 183.09 L437.71 184.20 L437.18 185.32 L436.61 186.42 L436.00 187.50 L435.37 188.58 L434.73 189.68 L434.07 190.80 L433.38 191.91 L432.63 193.00 L431.83 194.05 L430.96 195.06 L430.00 196.00 L428.98 196.90 L427.90 197.79 L426.76 198.65 L425.56 199.47 L424.29 200.23 L422.95 200.91 L421.52 201.51 L420.00 202.00 L418.39 202.37 L416.70 202.62 L414.92 202.79 L413.06 202.88 L411.14 202.92 L409.15 202.94 L407.10 202.96 L405.00 203.00 L402.69 203.05 L400.09 203.07 L397.33 203.07 L394.56 203.06 L391.91 203.04 L389.51 203.02 L387.49 203.01 L386.00 203.00Z" fill="#a2a2a2" stroke="#808080" stroke-width="0.5"/>
<path d="M386.00 194.30 L387.07 194.20 L388.49 194.08 L390.18 193.93 L392.06 193.76 L394.06 193.58 L396.10 193.39 L398.11 193.20 L400.00 193.00 L401.86 192.81 L403.79 192.61 L405.76 192.41 L407.74 192.21 L409.68 191.98 L411.56 191.75 L413.35 191.49 L415.00 191.20 L416.52 190.91 L417.93 190.61 L419.26 190.31 L420.51 189.99 L421.72 189.63 L422.89 189.22 L424.04 188.75 L425.20 188.20 L426.36 187.57 L427.50 186.87 L428.63 186.10 L429.72 185.29 L430.77 184.44 L431.77 183.56 L432.72 182.68 L433.60 181.80 L434.41 180.90 L435.17 179.97 L435.87 179.01 L436.52 178.03 L437.12 177.05 L437.69 176.08 L438.21 175.12 L438.70 174.20 L439.13 173.29 L439.49 172.36 L439.80 171.45 L440.07 170.54 L440.33 169.67 L440.59 168.83 L440.87 168.03 L441.20 167.30 L441.57 166.62 L441.96 165.98 L442.38 165.37 L442.79 164.81 L443.21 164.29 L443.63 163.82 L444.02 163.39 L444.40 163.00 L444.73 162.68 L445.01 162.42 L445.27 162.21 L445.52 162.04 L445.80 161.90 L446.12 161.77 L446.52 161.64 L447.00 161.50 L447.59 161.35 L448.26 161.21 L449.00 161.09 L449.79 160.97 L450.60 160.85 L451.42 160.74 L452.23 160.62 L453.00 160.50 L453.76 160.39 L454.54 160.29 L455.32 160.20 L456.09 160.11 L456.86 160.00 L457.61 159.87 L458.32 159.71 L459.00 159.50 L459.64 159.25 L460.25 158.98 L460.83 158.67 L461.39 158.34 L461.93 157.99 L462.46 157.61 L462.98 157.22 L463.50 156.80 L464.01 156.34 L464.50 155.84 L464.98 155.30 L465.45 154.75 L465.91 154.20 L466.37 153.66 L466.83 153.16 L467.30 152.70 L467.73 152.29 L468.11 151.91 L468.46 151.55 L468.83 151.22 L469.23 150.90 L469.70 150.59 L470.28 150.29 L471.00 150.00 L471.80 149.71 L472.62 149.44 L473.50 149.18 L474.48 148.93 L475.59 148.68 L476.85 148.45 L478.31 148.22 L480.00 148.00 L481.90 147.79 L483.97 147.58 L486.21 147.39 L488.62 147.20 L491.21 147.02 L493.97 146.84 L496.90 146.67 L500.00 146.50 L503.56 146.33 L507.70 146.15 L512.18 145.98 L516.75 145.81 L521.16 145.65 L525.17 145.51 L528.53 145.39 L531.00 145.30 L531.00 155.00 L528.92 155.04 L526.07 155.08 L522.67 155.13 L518.94 155.19 L515.09 155.25 L511.34 155.33 L507.90 155.41 L505.00 155.50 L502.60 155.60 L500.48 155.70 L498.57 155.82 L496.81 155.94 L495.14 156.07 L493.49 156.20 L491.80 156.35 L490.00 156.50 L488.06 156.67 L486.02 156.85 L483.94 157.05 L481.88 157.25 L479.89 157.45 L478.05 157.65 L476.40 157.83 L475.00 158.00 L473.88 158.14 L473.00 158.24 L472.30 158.32 L471.75 158.41 L471.29 158.50 L470.88 158.62 L470.46 158.78 L470.00 159.00 L469.54 159.28 L469.13 159.60 L468.77 159.96 L468.44 160.34 L468.11 160.75 L467.77 161.17 L467.41 161.59 L467.00 162.00 L466.55 162.42 L466.07 162.86 L465.57 163.32 L465.06 163.78 L464.54 164.24 L464.02 164.68 L463.51 165.11 L463.00 165.50 L462.51 165.87 L462.05 166.22 L461.59 166.55 L461.12 166.88 L460.65 167.18 L460.14 167.47 L459.60 167.74 L459.00 168.00 L458.35 168.24 L457.64 168.46 L456.90 168.66 L456.12 168.84 L455.34 169.02 L454.55 169.18 L453.76 169.34 L453.00 169.50 L452.24 169.64 L451.46 169.75 L450.68 169.85 L449.91 169.94 L449.14 170.04 L448.39 170.16 L447.68 170.31 L447.00 170.50 L446.35 170.72 L445.72 170.94 L445.11 171.17 L444.53 171.44 L443.98 171.74 L443.45 172.09 L442.96 172.51 L442.50 173.00 L442.10 173.57 L441.77 174.20 L441.48 174.88 L441.22 175.62 L440.96 176.41 L440.68 177.24 L440.37 178.11 L440.00 179.00 L439.59 179.94 L439.15 180.95 L438.70 182.00 L438.22 183.09 L437.71 184.20 L437.18 185.32 L436.61 186.42 L436.00 187.50 L435.37 188.58 L434.73 189.68 L434.07 190.80 L433.38 191.91 L432.63 193.00 L431.83 194.05 L430.96 195.06 L430.00 196.00 L428.98 196.90 L427.90 197.79 L426.76 198.65 L425.56 199.47 L424.29 200.23 L422.95 200.91 L421.52 201.51 L420.00 202.00 L418.39 202.37 L416.70 202.62 L414.92 202.79 L413.06 202.88 L411.14 202.92 L409.15 202.94 L407.10 202.96 L405.00 203.00 L402.69 203.05 L400.09 203.07 L397.33 203.07 L394.56 203.06 L391.91 203.04 L389.51 203.02 L387.49 203.01 L386.00 203.00Z" fill="url(#rstripe)"/>
<path d="M386.10 195.40 L387.17 195.30 L388.59 195.17 L390.28 195.03 L392.16 194.86 L394.16 194.68 L396.21 194.49 L398.22 194.29 L400.11 194.09 L401.97 193.90 L403.90 193.71 L405.88 193.51 L407.86 193.30 L409.81 193.08 L411.71 192.84 L413.52 192.57 L415.20 192.28 L416.73 191.98 L418.16 191.69 L419.51 191.38 L420.81 191.05 L422.06 190.67 L423.28 190.25 L424.49 189.75 L425.70 189.18 L426.91 188.52 L428.10 187.79 L429.27 187.00 L430.39 186.16 L431.48 185.28 L432.51 184.38 L433.48 183.47 L434.40 182.56 L435.25 181.62 L436.04 180.64 L436.77 179.64 L437.44 178.63 L438.07 177.62 L438.64 176.62 L439.18 175.65 L439.68 174.69 L440.14 173.72 L440.53 172.74 L440.85 171.78 L441.12 170.86 L441.38 169.98 L441.63 169.17 L441.89 168.44 L442.19 167.79 L442.52 167.17 L442.89 166.57 L443.27 166.01 L443.66 165.49 L444.06 165.00 L444.45 164.55 L444.82 164.14 L445.18 163.78 L445.49 163.47 L445.73 163.25 L445.92 163.10 L446.07 163.00 L446.25 162.91 L446.50 162.81 L446.85 162.69 L447.29 162.56 L447.83 162.42 L448.46 162.30 L449.18 162.17 L449.95 162.06 L450.75 161.94 L451.58 161.83 L452.39 161.71 L453.17 161.59 L453.91 161.48 L454.67 161.38 L455.44 161.29 L456.24 161.20 L457.03 161.09 L457.82 160.95 L458.60 160.77 L459.36 160.54 L460.06 160.27 L460.73 159.97 L461.36 159.64 L461.97 159.28 L462.55 158.90 L463.11 158.50 L463.66 158.08 L464.21 157.64 L464.77 157.14 L465.31 156.59 L465.81 156.03 L466.29 155.46 L466.75 154.91 L467.20 154.39 L467.63 153.92 L468.06 153.49 L468.50 153.08 L468.89 152.68 L469.23 152.35 L469.54 152.06 L469.87 151.80 L470.25 151.55 L470.74 151.29 L471.39 151.03 L472.16 150.75 L472.95 150.49 L473.80 150.24 L474.74 150.00 L475.80 149.76 L477.04 149.53 L478.47 149.31 L480.13 149.09 L482.01 148.88 L484.07 148.68 L486.30 148.48 L488.71 148.30 L491.28 148.12 L494.04 147.94 L496.96 147.77 L500.06 147.60 L503.61 147.43 L507.75 147.25 L512.22 147.07 L516.79 146.91 L521.20 146.75 L525.21 146.61 L528.57 146.49 L531.04 146.40" stroke="#80b8c2" stroke-width="0.8" fill="none"/>
<path d="M386.00 194.30 L387.07 194.20 L388.49 194.08 L390.18 193.93 L392.06 193.76 L394.06 193.58 L396.10 193.39 L398.11 193.20 L400.00 193.00 L401.86 192.81 L403.79 192.61 L405.76 192.41 L407.74 192.21 L409.68 191.98 L411.56 191.75 L413.35 191.49 L415.00 191.20 L416.52 190.91 L417.93 190.61 L419.26 190.31 L420.51 189.99 L421.72 189.63 L422.89 189.22 L424.04 188.75 L425.20 188.20 L426.36 187.57 L427.50 186.87 L428.63 186.10 L429.72 185.29 L430.77 184.44 L431.77 183.56 L432.72 182.68 L433.60 181.80 L434.41 180.90 L435.17 179.97 L435.87 179.01 L436.52 178.03 L437.12 177.05 L437.69 176.08 L438.21 175.12 L438.70 174.20 L439.13 173.29 L439.49 172.36 L439.80 171.45 L440.07 170.54 L440.33 169.67 L440.59 168.83 L440.87 168.03 L441.20 167.30 L441.57 166.62 L441.96 165.98 L442.38 165.37 L442.79 164.81 L443.21 164.29 L443.63 163.82 L444.02 163.39 L444.40 163.00 L444.73 162.68 L445.01 162.42 L445.27 162.21 L445.52 162.04 L445.80 161.90 L446.12 161.77 L446.52 161.64 L447.00 161.50 L447.59 161.35 L448.26 161.21 L449.00 161.09 L449.79 160.97 L450.60 160.85 L451.42 160.74 L452.23 160.62 L453.00 160.50 L453.76 160.39 L454.54 160.29 L455.32 160.20 L456.09 160.11 L456.86 160.00 L457.61 159.87 L458.32 159.71 L459.00 159.50 L459.64 159.25 L460.25 158.98 L460.83 158.67 L461.39 158.34 L461.93 157.99 L462.46 157.61 L462.98 157.22 L463.50 156.80 L464.01 156.34 L464.50 155.84 L464.98 155.30 L465.45 154.75 L465.91 154.20 L466.37 153.66 L466.83 153.16 L467.30 152.70 L467.73 152.29 L468.11 151.91 L468.46 151.55 L468.83 151.22 L469.23 150.90 L469.70 150.59 L470.28 150.29 L471.00 150.00 L471.80 149.71 L472.62 149.44 L473.50 149.18 L474.48 148.93 L475.59 148.68 L476.85 148.45 L478.31 148.22 L480.00 148.00 L481.90 147.79 L483.97 147.58 L486.21 147.39 L488.62 147.20 L491.21 147.02 L493.97 146.84 L496.90 146.67 L500.00 146.50 L503.56 146.33 L507.70 146.15 L512.18 145.98 L516.75 145.81 L521.16 145.65 L525.17 145.51 L528.53 145.39 L531.00 145.30" stroke="#e82020" stroke-width="1.25" fill="none"/>
<rect x="199.60" y="142.00" width="4.00" height="11.00" rx="0.6" fill="#111" transform="rotate(0.0 201.60 147.50)"/>
<rect x="235.25" y="145.70" width="4.50" height="11.00" rx="0.6" fill="#111" transform="rotate(15.0 237.50 151.20)"/>
<rect x="254.50" y="178.00" width="6.00" height="2.00" rx="0.6" fill="#111" transform="rotate(5.0 257.50 179.00)"/>
<rect x="280.25" y="196.45" width="4.50" height="5.50" rx="0.6" fill="#111" transform="rotate(10.0 282.50 199.20)"/>
<rect x="417.70" y="190.40" width="3.60" height="10.00" rx="0.6" fill="#111" transform="rotate(-10.0 419.50 195.40)"/>
<rect x="437.50" y="165.50" width="5.00" height="6.20" rx="0.6" fill="#111" transform="rotate(-40.0 440.00 168.60)"/>
<rect x="469.75" y="149.00" width="4.50" height="10.00" rx="0.6" fill="#111" transform="rotate(-10.0 472.00 154.00)"/>
<rect x="505.90" y="145.70" width="4.20" height="11.00" rx="0.6" fill="#111" transform="rotate(0.0 508.00 151.20)"/>
<rect x="299.40" y="196.00" width="9.90" height="15.80" rx="1.6" fill="url(#cylg)"/>
<rect x="376.40" y="191.10" width="10.40" height="16.20" rx="1.6" fill="url(#cylg)"/>
<rect x="193.00" y="319.30" width="9.80" height="15.30" rx="1.6" fill="url(#cylg)"/>
<rect x="452.00" y="298.80" width="10.00" height="11.40" rx="1.6" fill="url(#cylg)"/>
<path d="M309.3 196.7H324.5V211.5H309.3Z" fill="#cc0000"/>
<path d="M324.5 197.5H326.5L327.8 200.5L326.5 204L327.8 207.5L326.5 211H324.5Z" fill="#9c9c9c"/>
<path d="M326 192C329 194 330 196 327.5 199C330 202 330 206 327.5 208.5C330 211 330 214 326 216" stroke="#777" stroke-width="0.75" fill="none"/>
<path d="M334 192C337 194 338 196 335.5 199C338 202 338 206 335.5 208.5C338 211 338 214 334 216" stroke="#777" stroke-width="0.75" fill="none"/>
<path d="M337 197H346V206H337L338.5 203L337 200Z" fill="#9c9c9c"/>
<path d="M345.8 192.5L366.25 191.7V206.8L345.8 207.3Z" fill="#cc0000"/>
<path d="M366.25 192.9H376.5V205.7H366.25Z" fill="#a3a3a3"/>
<path d="M308.6 313.35L311 313.1L313.6 315.8L311.6 318.2L313.6 320.6L311 322.9L308.6 323.15Z" fill="#888" stroke="#6a6a6a" stroke-width="0.5"/>
<path d="M318.5 311.5L321.5 311L322 313L321 314.5L322 316.5L321.5 317.5L318.5 318L319.5 315.5Z" fill="#8a8a8a"/>
<rect x="252.60" y="162.20" width="10.00" height="7.50" rx="0.9" fill="#ffffff" fill-opacity="0.88" stroke="#d2d2d2" stroke-width="0.5"/>
<text x="257.60" y="167.97" font-family="Liberation Sans" font-size="5.6" fill="#262626" text-anchor="middle" font-weight="bold">S1</text>
<rect x="249.30" y="170.00" width="16.10" height="7.40" rx="0.9" fill="#ffffff" fill-opacity="0.88" stroke="#d2d2d2" stroke-width="0.5"/>
<text x="257.35" y="175.32" font-family="Liberation Sans" font-size="4.5" fill="#262626" text-anchor="middle" font-weight="bold">50 cm</text>
<rect x="337.80" y="192.70" width="10.00" height="9.20" rx="0.9" fill="#ffffff" fill-opacity="0.88" stroke="#d2d2d2" stroke-width="0.5"/>
<text x="342.80" y="199.32" font-family="Liberation Sans" font-size="5.6" fill="#262626" text-anchor="middle" font-weight="bold">S4</text>
<rect x="335.30" y="202.40" width="16.40" height="6.70" rx="0.9" fill="#ffffff" fill-opacity="0.88" stroke="#d2d2d2" stroke-width="0.5"/>
<text x="343.50" y="207.30" font-family="Liberation Sans" font-size="4.3" fill="#262626" text-anchor="middle" font-weight="bold">100 cm</text>
<rect x="446.30" y="157.00" width="10.00" height="8.80" rx="0.9" fill="#ffffff" fill-opacity="0.88" stroke="#d2d2d2" stroke-width="0.5"/>
<text x="451.30" y="163.42" font-family="Liberation Sans" font-size="5.6" fill="#262626" text-anchor="middle" font-weight="bold">S5</text>
<rect x="444.20" y="166.80" width="15.60" height="6.80" rx="0.9" fill="#ffffff" fill-opacity="0.88" stroke="#d2d2d2" stroke-width="0.5"/>
<text x="452.00" y="171.78" font-family="Liberation Sans" font-size="4.4" fill="#262626" text-anchor="middle" font-weight="bold">length</text>
<rect x="460.00" y="213.20" width="10.00" height="8.60" rx="0.9" fill="#ffffff" fill-opacity="0.88" stroke="#d2d2d2" stroke-width="0.5"/>
<text x="465.00" y="219.52" font-family="Liberation Sans" font-size="5.6" fill="#262626" text-anchor="middle" font-weight="bold">S6</text>
<rect x="457.20" y="222.30" width="15.40" height="6.60" rx="0.9" fill="#ffffff" fill-opacity="0.88" stroke="#d2d2d2" stroke-width="0.5"/>
<text x="464.90" y="227.18" font-family="Liberation Sans" font-size="4.4" fill="#262626" text-anchor="middle" font-weight="bold">length</text>
<rect x="249.20" y="263.30" width="10.00" height="8.80" rx="0.9" fill="#ffffff" fill-opacity="0.88" stroke="#d2d2d2" stroke-width="0.5"/>
<text x="254.20" y="269.72" font-family="Liberation Sans" font-size="5.6" fill="#262626" text-anchor="middle" font-weight="bold">S3</text>
<rect x="246.50" y="272.40" width="15.60" height="6.80" rx="0.9" fill="#ffffff" fill-opacity="0.88" stroke="#d2d2d2" stroke-width="0.5"/>
<text x="254.30" y="277.38" font-family="Liberation Sans" font-size="4.4" fill="#262626" text-anchor="middle" font-weight="bold">length</text>
<rect x="323.00" y="308.20" width="9.60" height="9.00" rx="0.9" fill="#ffffff" fill-opacity="0.88" stroke="#d2d2d2" stroke-width="0.5"/>
<text x="327.80" y="314.72" font-family="Liberation Sans" font-size="5.6" fill="#262626" text-anchor="middle" font-weight="bold">S2</text>
<rect x="318.80" y="317.40" width="17.80" height="6.80" rx="0.9" fill="#ffffff" fill-opacity="0.88" stroke="#d2d2d2" stroke-width="0.5"/>
<text x="327.70" y="322.35" font-family="Liberation Sans" font-size="4.3" fill="#262626" text-anchor="middle" font-weight="bold">200 cm</text>
<rect x="461.40" y="283.50" width="10.40" height="8.60" rx="0.9" fill="#ffffff" fill-opacity="0.88" stroke="#d2d2d2" stroke-width="0.5"/>
<text x="466.60" y="289.82" font-family="Liberation Sans" font-size="5.6" fill="#262626" text-anchor="middle" font-weight="bold">F4</text>
<rect x="458.50" y="292.40" width="16.20" height="7.80" rx="0.9" fill="#ffffff" fill-opacity="0.88" stroke="#d2d2d2" stroke-width="0.5"/>
<text x="466.60" y="297.96" font-family="Liberation Sans" font-size="4.6" fill="#262626" text-anchor="middle" font-weight="bold">length</text>
<rect x="114.5" y="128.2" width="7" height="38" rx="1.6" fill="#e2e2e2" stroke="#9e9e9e" stroke-width="0.6"/>
<path d="M115 143H121M115 150H121" stroke="#a8a8a8" stroke-width="0.8"/><rect x="116" y="131" width="2" height="32" fill="#f4f4f4"/>
<rect x="120.8" y="123" width="5.4" height="47.8" fill="#f6f6f6" stroke="#a0a0a0" stroke-width="0.6"/>
<rect x="126.2" y="122.5" width="8" height="49.5" fill="url(#cyl1)"/>
<rect x="134.2" y="122.5" width="2" height="49.5" fill="#d8d8d8"/>
<rect x="136.2" y="122.5" width="8" height="49.5" fill="url(#cyl1)"/>
<rect x="144.3" y="161" width="15.5" height="9.5" fill="#fbfbfb" stroke="#cfcfcf" stroke-width="0.5"/>
<path d="M159 147.8L189 147.5M159 156L175 151.5L189 150.5" stroke="#a8a8a8" stroke-width="2.6" fill="none"/>
<path d="M159 147.8L189 147.5M159 156L175 151.5L189 150.5" stroke="#f4f4f4" stroke-width="1.8" fill="none"/>
<path d="M144.3 121.3H158.8V126.5Q159.5 130.5 165 133.5L171.3 136.5H188.6V140.7H171.3L163 145.5H158.8V161.5H144.3Z" fill="#3a5110" stroke="#26350a" stroke-width="0.6"/>
<path d="M163 145.3L171.3 140.9" stroke="#1d2a05" stroke-width="0.9"/>
<rect x="190.5" y="161" width="6.6" height="11" fill="url(#cyl1)"/>
<path d="M188 152.5H198.4V161.5H188Z" fill="#f2f2f2" stroke="#b5b5b5" stroke-width="0.5"/>
<path d="M190.6 121.3H196.6L197.6 125.5H198.6V158L197.2 161H190.4L188 158V125.5H189.6Z" fill="#40581a"/>
<rect x="191.2" y="122" width="4.4" height="38.5" fill="#1f3206"/>
<rect x="188" y="140.5" width="10.6" height="1" fill="#2f4a0c"/>
<rect x="150.4" y="135.8" width="13.9" height="6.4" fill="#e9ebe2"/>
<text x="157.3" y="141" font-family="Liberation Sans" font-size="4.8" fill="#333" text-anchor="middle">?1,2</text>
<rect x="151.6" y="143.4" width="9.4" height="9.2" fill="#e9ebe2"/>
<text x="156.3" y="150.3" font-family="Liberation Sans" font-weight="bold" font-size="5.6" fill="#222" text-anchor="middle">C1</text>
<rect x="170" y="306.6" width="37.5" height="3.2" fill="#f2f2f2" stroke="#b5b5b5" stroke-width="0.5"/>
<rect x="170" y="342.7" width="37.5" height="3.2" fill="#f2f2f2" stroke="#b5b5b5" stroke-width="0.5"/>
<rect x="207.5" y="305.4" width="8" height="5.8" fill="url(#brass)"/>
<rect x="215.2" y="302.6" width="7.2" height="11" rx="0.6" fill="url(#brass2)"/>
<rect x="209" y="308.9" width="1.4" height="1.4" fill="#3a2c08"/>
<rect x="207.5" y="342.2" width="8" height="5.8" fill="url(#brass)"/>
<rect x="215.2" y="339.4" width="7.2" height="11" rx="0.6" fill="url(#brass2)"/>
<rect x="209" y="345.7" width="1.4" height="1.4" fill="#3a2c08"/>
<rect x="154.2" y="305.4" width="5" height="4.9" rx="1" fill="#eeeeee" stroke="#b0b0b0" stroke-width="0.5"/>
<rect x="154.5" y="344" width="4.8" height="3.8" rx="1" fill="#666" stroke="#444" stroke-width="0.4"/>
<path d="M159 305C159 303.8 159.8 303.3 161 303.3H180.5C182 303.3 182.6 304 182.6 305.5V310.5H170.8V341.8H182.6V347.3C182.6 348.6 182 349.2 180.5 349.2H161C159.8 349.2 159 348.7 159 347.5Z" fill="#dcdcdc" stroke="#9c9c9c" stroke-width="0.6"/>
<rect x="160.5" y="305" width="3.5" height="42" fill="#eeeeee"/>
<path d="M170.8 311H184.7L193 316.5V336L184.7 341.6H170.8Z" fill="#e2e2e2" stroke="#a0a0a0" stroke-width="0.6"/>
<rect x="172" y="314.8" width="8" height="16" fill="#fafafa"/>
<text x="176" y="320.8" font-family="Liberation Sans" font-size="5" fill="#333" text-anchor="middle" transform="rotate(180 176 319)">P</text>
<text x="176.2" y="329.5" font-family="Liberation Sans" font-weight="bold" font-size="5.6" fill="#222" text-anchor="middle">C2</text>
<rect x="530.8" y="142.2" width="7.5" height="4" fill="#8a1010"/>
<rect x="536" y="142.3" width="5" height="1.2" fill="#8a1010"/>
<rect x="530.8" y="156" width="7.5" height="3.6" fill="#8a1010"/>
<rect x="531" y="146" width="9.4" height="10" fill="#fbfbfb" stroke="#d0d0d0" stroke-width="0.4"/>
<text x="535.5" y="152.9" font-family="Liberation Sans" font-weight="bold" font-size="5.2" fill="#222" text-anchor="middle">C3</text>
<rect x="461.8" y="300" width="16" height="9.2" fill="#a6a6a6"/>
<path d="M462 302.3H478M462 304.6H478M462 306.9H478" stroke="#8a8a8a" stroke-width="0.5"/>
<circle cx="494" cy="317.6" r="19.5" fill="#fff" stroke="#5a5a5a" stroke-width="0.55"/>
<path d="M476 307.0H501" stroke="#a8a8a8" stroke-width="1.25"/>
<path d="M476 307.0H480" stroke="#e0b020" stroke-width="1.25"/>
<circle cx="504.5" cy="307.0" r="1.1" fill="#111"/>
<path d="M476 311.0H501" stroke="#9a2020" stroke-width="1.25"/>
<path d="M476 311.0H480" stroke="#d8a020" stroke-width="1.25"/>
<path d="M495 311.0H501" stroke="#e08020" stroke-width="1.25"/>
<path d="M501 311.0H506" stroke="#bbb" stroke-width="0.7"/>
<path d="M476 315.5H501" stroke="#2a7a2a" stroke-width="1.25"/>
<path d="M476 315.5H480" stroke="#d8a020" stroke-width="1.25"/>
<path d="M495 315.5H501" stroke="#d02020" stroke-width="1.25"/>
<circle cx="504" cy="315.5" r="2.2" fill="#fff" stroke="#555" stroke-width="0.5"/>
<path d="M476 320.5H501" stroke="#c8b030" stroke-width="1.25"/>
<path d="M476 320.5H480" stroke="#c89a30" stroke-width="1.25"/>
<path d="M495 320.5H501" stroke="#d02020" stroke-width="1.25"/>
<circle cx="504" cy="320.5" r="2.2" fill="#fff" stroke="#555" stroke-width="0.5"/>
<path d="M476 326.0H501" stroke="#e4e4e4" stroke-width="1.25"/>
<path d="M476 326.0H480" stroke="#f0dca0" stroke-width="1.25"/>
<path d="M495 326.0H501" stroke="#f0b0b0" stroke-width="1.25"/>
<circle cx="504" cy="326.0" r="2.2" fill="#fff" stroke="#ccc" stroke-width="0.5"/>
</svg>
<div class="a" style="left:552.5px;top:413.5px;width:14px;height:14px;border-radius:7px;background:#fff;box-shadow:0 0.5px 2px rgba(0,0,0,.25)"></div>
<svg class="a" style="left:555px;top:416px" width="9" height="9" viewBox="0 0 9 9"><circle cx="3.8" cy="3.8" r="2.6" fill="none" stroke="#555" stroke-width="1"/><path d="M5.7 5.7L8 8" stroke="#555" stroke-width="1.2"/><path d="M2.4 3.8H5.2" stroke="#555" stroke-width="0.7"/></svg>
<div class="a" style="left:571px;top:414.5px;width:42px;height:13px;border-radius:6.5px;background:#fff;box-shadow:0 0.5px 2px rgba(0,0,0,.25)"></div>
<div class="a t" style="left:579.5px;top:418px;font-size:5.5px;color:#333;letter-spacing:-0.4px">100 %</div>
<svg class="a" style="left:600px;top:417px" width="9" height="9" viewBox="0 0 9 9" stroke="#444" stroke-width="0.9" fill="none"><path d="M1 3.2L3 1.2M1.3 1.2H3V2.9M8 3.2L6 1.2M7.7 1.2H6V2.9M1 5.8L3 7.8M1.3 7.8H3V6.1M8 5.8L6 7.8M7.7 7.8H6V6.1"/></svg>
<div class="a" style="left:617.5px;top:413.5px;width:14px;height:14px;border-radius:7px;background:#fff;box-shadow:0 0.5px 2px rgba(0,0,0,.25)"></div>
<svg class="a" style="left:620px;top:416px" width="9" height="9" viewBox="0 0 9 9"><circle cx="3.8" cy="3.8" r="2.6" fill="none" stroke="#555" stroke-width="1"/><path d="M5.7 5.7L8 8" stroke="#555" stroke-width="1.2"/><path d="M2.4 3.8H5.2M3.8 2.4V5.2" stroke="#555" stroke-width="0.7"/></svg>
<div id="hdr" class="a">
 <svg class="a" style="left:0;top:0" width="60" height="18" viewBox="0 0 60 18">
  <rect x="19" y="3.2" width="23.2" height="2.4" fill="#fff"/>
  <rect x="19" y="13.6" width="23.2" height="2.2" fill="#fff"/>
  <path d="M9.7 9.3H15.8V14.6H19M42.2 4.4H46V9.3H52" stroke="#fff" stroke-width="0.8" fill="none"/>
  <text x="30.6" y="11.6" font-family="Liberation Sans" font-size="6" font-weight="bold" fill="#fff" text-anchor="middle" letter-spacing="-0.15">pickering</text>
 </svg>
 <svg class="a" style="left:72px;top:5px" width="10" height="9" viewBox="0 0 10 9"><path d="M9 4.5H2M5 1L1.5 4.5L5 8" stroke="#fff" stroke-width="1.4" fill="none"/></svg>
 <svg class="a" style="left:91px;top:5px" width="9" height="9" viewBox="0 0 9 9" fill="#fff">
  <rect x="0.5" y="0.5" width="2" height="2"/><rect x="3.5" y="0.5" width="2" height="2"/><rect x="6.5" y="0.5" width="2" height="2"/>
  <rect x="0.5" y="3.5" width="2" height="2"/><rect x="3.5" y="3.5" width="2" height="2"/><rect x="6.5" y="3.5" width="2" height="2"/>
  <rect x="0.5" y="6.5" width="2" height="2"/><rect x="3.5" y="6.5" width="2" height="2"/><rect x="6.5" y="6.5" width="2" height="2"/>
 </svg>
 <div class="a t" style="left:123px;top:5.5px;font-size:7.5px;font-weight:bold;color:#fff;letter-spacing:-0.4px">Cable Design Tool</div>
 <div class="a t" style="left:200.5px;top:6.6px;font-size:6px;color:#fff;letter-spacing:-0.2px">SSA test project 1</div>
 <svg class="a" style="left:253px;top:7px" width="5" height="6" viewBox="0 0 5 6"><path d="M1.2 0.8L3.6 3L1.2 5.2" stroke="#fff" stroke-width="0.9" fill="none"/></svg>
 <div class="a t" style="left:265.5px;top:6.5px;font-size:6.2px;color:#fff;letter-spacing:-0.35px">Test Cable</div>
 <svg class="a" style="left:294px;top:8px" width="5" height="4" viewBox="0 0 5 4"><path d="M0.5 1H4.5L2.5 3.2Z" fill="#fff"/></svg>
 <!-- right icons -->
 <svg class="a" style="left:666px;top:5px" width="9" height="9" viewBox="0 0 9 9"><circle cx="4.5" cy="4.5" r="3.9" fill="#fff"/><path d="M3.1 3.5C3.1 2.6 3.7 2.1 4.5 2.1S5.9 2.6 5.9 3.4C5.9 4.3 4.6 4.4 4.6 5.4" stroke="#033a76" stroke-width="1" fill="none"/><circle cx="4.6" cy="6.6" r="0.55" fill="#033a76"/></svg>
 <svg class="a" style="left:683px;top:5px" width="8" height="9" viewBox="0 0 8 9"><path d="M4 1C2.5 1 1.8 2.3 1.8 3.7V5.8L1 6.8H7L6.2 5.8V3.7C6.2 2.3 5.5 1 4 1Z" fill="#fff"/><circle cx="4" cy="7.7" r="0.8" fill="#fff"/></svg>
 <svg class="a" style="left:698.5px;top:5px" width="9" height="9" viewBox="0 0 9 9"><path d="M0.8 0.8H8.2V6.6H2.6L0.8 8.4Z" fill="#fff"/><path d="M2.2 2.9H6.8M2.2 4.6H5.4" stroke="#033a76" stroke-width="0.8"/></svg>
 <svg class="a" style="left:718.5px;top:5px" width="9" height="9" viewBox="0 0 24 24"><path fill="#fff" d="M19.14 12.94c.04-.3.06-.61.06-.94 0-.32-.02-.64-.07-.94l2.03-1.58a.49.49 0 0 0 .12-.61l-1.92-3.320a.49.49 0 0 0-.59-.22l-2.39.96c-.5-.38-1.03-.7-1.62-.94l-.36-2.54a.48.48 0 0 0-.48-.41h-3.84c-.24 0-.43.17-.47.41l-.36 2.54c-.59.24-1.130.57-1.62.94l-2.39-.96a.48.48 0 0 0-.59.22L2.74 8.87c-.12.21-.08.47.12.61l2.03 1.58c-.05.3-.09.63-.09.94s.02.64.07.94l-2.03 1.58a.49.49 0 0 0-.12.61l1.92 3.32c.12.22.37.29.59.22l2.39-.96c.5.38 1.03.7 1.62.94l.36 2.54c.05.24.24.41.48.41h3.84c.24 0 .44-.17.47-.41l.36-2.54c.59-.24 1.13-.56 1.62-.94l2.39.96c.22.08.47 0 .59-.22l1.92-3.32c.12-.22.07-.47-.12-.61l-2.01-1.58zM12 15.6c-1.98 0-3.6-1.62-3.6-3.6s1.62-3.6 3.6-3.6 3.6 1.62 3.6 3.6-1.62 3.6-3.6 3.6z"/></svg>
 <svg class="a" style="left:744px;top:1.5px" width="15" height="15" viewBox="0 0 15 15"><circle cx="7.5" cy="7.5" r="6.6" fill="#fff"/><circle cx="7.5" cy="5.6" r="2.2" fill="#033a76"/><path d="M3.6 11.3C4.6 9.6 6 9.1 7.5 9.1S10.4 9.6 11.4 11.3C10.4 12.4 9 13 7.5 13S4.6 12.4 3.6 11.3Z" fill="#033a76"/></svg>
</div>
<div id="tb" class="a">
 <div class="a t" style="left:7.2px;top:7px;font-size:7.3px;font-weight:bold;color:#1f4983;letter-spacing:-0.3px">File</div>
 <svg class="a" style="left:24px;top:9px" width="5" height="4" viewBox="0 0 5 4"><path d="M0.6 1H4.2L2.4 3Z" fill="#1d4f8e"/></svg>
 <div class="a" style="left:33px;top:5px;width:1px;height:11px;background:#dcdcdc"></div>
 <svg class="a" style="left:39px;top:7px" width="9" height="6" viewBox="0 0 9 6"><path d="M1.5 4.5C2.5 1.8 5.5 1.5 7.5 3.8" stroke="#cfcfcf" stroke-width="1" fill="none"/><path d="M0.8 2.2L1.5 4.8L3.9 4" stroke="#cfcfcf" stroke-width="1" fill="none"/></svg>
 <svg class="a" style="left:57px;top:7px" width="9" height="6" viewBox="0 0 9 6"><path d="M7.5 4.5C6.5 1.8 3.5 1.5 1.5 3.8" stroke="#cfcfcf" stroke-width="1" fill="none"/><path d="M8.2 2.2L7.5 4.8L5.1 4" stroke="#cfcfcf" stroke-width="1" fill="none"/></svg>
 <div class="a" style="left:74px;top:4.5px;width:12px;height:12px;background:#1565c0;border-radius:2px"></div>
 <svg class="a" style="left:74px;top:4.5px" width="12" height="12" viewBox="0 0 12 12"><path d="M4 2.3V9.4L5.8 7.7L7.1 10.2L8.2 9.6L7 7.2H9.4Z" fill="#fff"/></svg>
 <svg class="a" style="left:93.5px;top:6px" width="10" height="9" viewBox="0 0 10 9"><path d="M2.2 3.2V1.6C2.2 0.9 3.2 0.9 3.2 1.6V0.9C3.2 0.2 4.3 0.2 4.3 0.9V0.8C4.3 0.1 5.4 0.1 5.4 0.8V1.3C5.4 0.6 6.5 0.6 6.5 1.3V5.5C6.5 7.5 5.5 8.5 4 8.5C2.8 8.5 2 7.8 1.4 6.8L0.3 4.8C0 4.2 0.7 3.7 1.2 4.2L2.2 5.2Z" fill="#222"/><rect x="6" y="2" width="1.6" height="5.5" fill="#222"/></svg>
 <div class="a" style="left:108px;top:5px;width:1px;height:11px;background:#dcdcdc"></div>
 <svg class="a" style="left:114px;top:7px" width="12" height="11" viewBox="0 0 12 11" fill="#222"><rect x="0.5" y="0" width="4" height="1.3"/><rect x="2" y="3" width="3" height="1.3"/><rect x="2" y="5.6" width="6" height="1.3"/><rect x="2" y="3" width="1.3" height="4"/><path d="M9.5 8.2L11 8.2L9.3 10.6Z"/></svg>
 <svg class="a" style="left:131.5px;top:7px" width="12" height="11" viewBox="0 0 12 11" fill="#222"><rect x="0.5" y="2.5" width="1.3" height="3.5"/><rect x="0.5" y="3.6" width="4" height="1.3"/><rect x="3.5" y="2" width="1.3" height="3"/><rect x="6.5" y="1.2" width="1.3" height="4.8"/><rect x="6.5" y="3.6" width="3" height="1.3"/><path d="M9.5 8.2L11 8.2L9.3 10.6Z"/></svg>
 <div class="a" style="left:147px;top:5px;width:1px;height:11px;background:#dcdcdc"></div>
 <svg class="a" style="left:153px;top:7px" width="9" height="8" viewBox="0 0 9 8" fill="#333"><rect x="0.3" y="0" width="1" height="8"/><rect x="7.7" y="0" width="1" height="8"/><rect x="3" y="1" width="3" height="6"/></svg>
 <svg class="a" style="left:172.5px;top:7px" width="9" height="8" viewBox="0 0 9 8" fill="#333"><rect x="0" y="0.3" width="9" height="1"/><rect x="0" y="6.7" width="9" height="1"/><rect x="1" y="3" width="7" height="2.2"/></svg>
 <div class="a" style="left:186px;top:5px;width:1px;height:11px;background:#dcdcdc"></div>
 <svg class="a" style="left:192px;top:6.5px" width="8" height="8" viewBox="0 0 8 8"><rect x="0" y="0" width="8" height="8" rx="1.2" fill="#222"/><circle cx="4" cy="4" r="2.2" fill="#fff"/><circle cx="4" cy="4" r="1.2" fill="#222"/></svg>
 <!-- tabs -->
 <div class="a t" style="left:328.5px;top:9.5px;font-size:7.4px;font-weight:bold;color:#222;letter-spacing:-0.25px">Schema</div>
 <div class="a" style="left:321.5px;top:18px;width:41px;height:2px;background:#0b3a79"></div>
 <div class="a t" style="left:368.5px;top:9.5px;font-size:7.4px;font-weight:bold;color:#4a4a4a;letter-spacing:-0.3px">Link Pins</div>
 <div class="a t" style="left:406.5px;top:9.5px;font-size:7.4px;font-weight:bold;color:#4a4a4a;letter-spacing:-0.3px">Description</div>
 <svg class="a" style="left:531px;top:6px" width="6" height="10" viewBox="0 0 6 10"><path d="M4.2 2.8V7C4.2 8.2 3.5 9 2.8 9S1.2 8.2 1.2 7V2.3C1.2 1.4 1.8 0.8 2.6 0.8S4 1.4 4 2.3V6.6C4 7.1 3.6 7.4 3.2 7.4S2.4 7.1 2.4 6.6V3" stroke="#777" stroke-width="0.9" fill="none"/></svg>
 <svg class="a" style="left:547px;top:7px" width="8" height="8" viewBox="0 0 8 8"><rect x="0" y="0" width="8" height="7.6" rx="1" fill="#222"/><path d="M2 6L3.3 4.6L4.2 5.5L5.3 4.2L6.3 6Z" fill="#fff"/></svg>
 <svg class="a" style="left:564px;top:7px" width="9" height="8" viewBox="0 0 9 8" fill="#222"><rect x="0" y="0" width="8.5" height="3.2" rx="0.8"/><rect x="0" y="4.4" width="8.5" height="3.2" rx="0.8"/></svg>
 <svg class="a" style="left:582px;top:6px" width="10" height="9" viewBox="0 0 10 9"><path d="M2.3 2.2A3.6 3.6 0 1 1 2 6.3" stroke="#333" stroke-width="1" fill="none"/><path d="M0.4 2.4L2.6 4.2L3.2 1.4Z" fill="#333"/><path d="M5.6 2.8V4.8L6.9 5.8" stroke="#333" stroke-width="0.8" fill="none"/></svg>
 <div class="a" style="left:606.5px;top:3.5px;width:55px;height:13.5px;background:#0b3a79;border-radius:7px"></div>
 <div class="a t" style="left:613px;top:6.4px;font-size:7.6px;font-weight:bold;color:#fff;letter-spacing:-0.45px">Submit</div>
 <svg class="a" style="left:640.5px;top:5.5px" width="9" height="9" viewBox="0 0 9 9"><circle cx="4.5" cy="4.5" r="3.6" fill="#fff"/><path d="M2.8 4.6L4 5.8L6.3 3.3" stroke="#0b3a79" stroke-width="1.1" fill="none"/></svg>
 <svg class="a" style="left:651px;top:8.5px" width="5" height="4" viewBox="0 0 5 4"><path d="M0.8 1H4.2L2.5 2.8Z" fill="#fff"/></svg>
 <div class="a" style="left:666px;top:3.5px;width:53.5px;height:13.5px;background:#0b3a79;border-radius:7px"></div>
 <div class="a t" style="left:672.8px;top:6.4px;font-size:7.6px;font-weight:bold;color:#fff;letter-spacing:-0.35px">Export</div>
 <svg class="a" style="left:698px;top:5.8px" width="9" height="9" viewBox="0 0 9 9"><path d="M1.5 6.8C2.2 4.8 3.5 4 5.4 4V2.6L7.8 4.9L5.4 7.1V5.6C3.8 5.6 2.6 6 1.5 6.8Z" fill="#fff"/></svg>
 <svg class="a" style="left:709px;top:8.5px" width="5" height="4" viewBox="0 0 5 4"><path d="M0.8 1H4.2L2.5 2.8Z" fill="#fff"/></svg>
 <div class="a" style="left:724.5px;top:3.5px;width:41px;height:13.5px;background:#d0d0d0;border-radius:7px"></div>
 <div class="a t" style="left:731px;top:6.4px;font-size:7.6px;font-weight:bold;color:#f6f6f6;letter-spacing:-0.3px">Save</div>
 <svg class="a" style="left:750px;top:6px" width="8" height="8" viewBox="0 0 8 8"><path d="M0.8 0.8H6L7.2 2V7.2H0.8Z" fill="#fff"/><rect x="2" y="1.5" width="3.2" height="1.6" fill="#d0d0d0"/><circle cx="4" cy="5.2" r="1.1" fill="#d0d0d0"/></svg>
</div>
<div id="ls" class="a">
 <svg class="a" style="left:0;top:0" width="20" height="140" viewBox="0 40 20 140">
  <path d="M5 60.5C7.5 60.5 8.3 58.8 9.6 57C10.8 55.2 11.8 54.4 14.8 54.2" stroke="#222" stroke-width="1.4" fill="none" stroke-linecap="round"/>
  <path d="M5 72.6C7.5 73.5 9 74.6 10 75.4C11 74.6 12.5 73.5 15 72.6M5 78.3C7.5 77.4 9 76.3 10 75.4C11 76.3 12.5 77.4 15 78.3" stroke="#222" stroke-width="1.3" fill="none" stroke-linecap="round"/>
  <rect x="4" y="86.4" width="12.2" height="0.8" fill="#d6d6d6"/>
  <path d="M8.3 94.8H10C12 94.8 13.6 96.3 14 98.3H15.3V98.7H14C13.6 100.6 12 102 10 102H8.3Z" fill="#111"/>
  <rect x="4.8" y="95.9" width="3.8" height="1.2" fill="#111"/><rect x="4.8" y="99.7" width="3.8" height="1.2" fill="#111"/>
  <path d="M11.7 112.3H10C8 112.3 6.4 113.8 6 115.8H4.7V116.2H6C6.4 118.1 8 119.5 10 119.5H11.7Z" fill="#111"/>
  <rect x="11.4" y="113.4" width="3.8" height="1.2" fill="#111"/><rect x="11.4" y="117.2" width="3.8" height="1.2" fill="#111"/>
  <rect x="7.6" y="128.6" width="5" height="10.2" rx="2.5" fill="#444"/>
  <path d="M7.6 131.3H12.6M7.6 133.7H12.6M7.6 136.1H12.6" stroke="#888" stroke-width="0.6"/>
  <path d="M4.6 146.4L11 150.3V151.5L4.6 155.6Z" fill="#666"/><path d="M4.6 146.4L11 150.3H15V151.6H11L4.6 155.6" stroke="#222" stroke-width="0.9" fill="none"/>
  <path d="M15.2 164.4L9 168.2V169.3L15.2 173.2Z" fill="#777"/><path d="M15.2 164.4L9 168.2H4.6V169.4H9L15.2 173.2M9.2 168.8L15 166.6M9.2 168.8L15 171" stroke="#222" stroke-width="0.9" fill="none"/>
 </svg>
 <svg class="a" style="left:2px;top:370px" width="17" height="17" viewBox="0 0 17 17"><circle cx="8.2" cy="7.8" r="7.6" fill="#0a2f6e"/><rect x="6" y="3.8" width="5.2" height="5.6" fill="none" stroke="#fff" stroke-width="0.9"/><path d="M4.6 5.2V10.8H9.8" stroke="#fff" stroke-width="0.9" fill="none"/><path d="M7 5.3H10.2M7 6.8H10.2" stroke="#fff" stroke-width="0.6"/></svg>
</div>
<div id="rp" class="a">
 <div class="a" style="left:0;top:0;width:133px;height:33px;background:#f0f1f4;border-bottom:1px solid #e2e3e6"></div>
 <svg class="a" style="left:6.0px;top:5.5px" width="6" height="8" viewBox="0 0 6 8"><path d="M1.6 1.4L4 4L1.6 6.6" stroke="#0b3a79" stroke-width="1.1" fill="none"/></svg>
 <div class="a" style="left:0;top:17.5px;width:33px;height:16px;background:#fff;border-radius:0 5px 0 0"></div>
 <svg class="a" style="left:11.5px;top:21.5px" width="9" height="9" viewBox="0 0 9 9"><circle cx="4.5" cy="4.5" r="4" fill="#0b3a79"/><rect x="3.9" y="3.7" width="1.2" height="3.3" fill="#fff"/><circle cx="4.5" cy="2.6" r="0.7" fill="#fff"/></svg>
 <svg class="a" style="left:45.0px;top:22px" width="9" height="8" viewBox="0 0 9 8" fill="#0b3a79"><rect x="0" y="1" width="9" height="0.9"/><rect x="0" y="3.6" width="9" height="0.9"/><rect x="0" y="6.2" width="9" height="0.9"/><rect x="5.2" y="0" width="1.1" height="2.9"/><rect x="2.4" y="2.6" width="1.1" height="2.9"/><rect x="4.6" y="5.2" width="1.1" height="2.9"/></svg>
 <svg class="a" style="left:78.0px;top:21.5px" width="9" height="9" viewBox="0 0 9 9"><rect x="0.3" y="0.3" width="8.4" height="8.4" rx="1" fill="#0b3a79"/><path d="M2.2 6.8L2.5 5.4L5.9 2L7 3.1L3.6 6.5Z" fill="#fff"/></svg>
 <svg class="a" style="left:111.0px;top:21px" width="9" height="10" viewBox="0 0 9 10"><path d="M0.6 0.6H8.4V7L4.5 9.4L0.6 7Z" fill="#0b3a79"/><text x="4.5" y="6.8" font-family="Liberation Sans" font-weight="bold" font-size="6.2" fill="#fff" text-anchor="middle">?</text></svg>
 <div class="a t" style="left:8.5px;top:42.5px;font-size:7.3px;font-weight:bold;color:#0b3a79;letter-spacing:-0.25px">Product Details</div>
 <svg class="a" style="left:53.0px;top:82px" width="27" height="27" viewBox="0 0 27 27"><circle cx="13.3" cy="13" r="11" fill="none" stroke="#c2c2c2" stroke-width="1.9"/><rect x="12.3" y="10.4" width="2" height="8" fill="#c2c2c2"/><circle cx="13.3" cy="7.5" r="1.15" fill="#c2c2c2"/></svg>
 <div class="a t" style="left:26.0px;top:117.5px;font-size:10.2px;color:#bcbcbc;letter-spacing:-0.45px;-webkit-text-stroke:0.3px #bcbcbc">No Object Selected</div>
</div>
<div class="a" style="left:766.4px;top:0;width:1.6px;height:432px;background:rgba(0,0,0,0.22);z-index:9"></div>
<svg class="a" style="left:0;top:426px;z-index:9" width="6" height="6" viewBox="0 0 6 6"><path d="M0 2.5C1 3.2 1.8 4.5 2.5 6H0Z" fill="#000"/></svg>
<svg class="a" style="left:762px;top:426px;z-index:9" width="6" height="6" viewBox="0 0 6 6"><path d="M6 1.5C5 3.5 3.8 5 2 6H6Z" fill="#000"/></svg>
</body></html>
